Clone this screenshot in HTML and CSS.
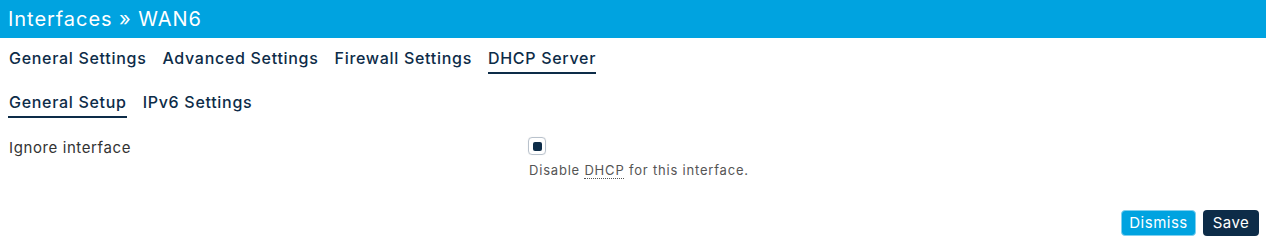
FILE: index.html
```html
<!DOCTYPE html>
<html>
<head>
<meta charset="utf-8">
<link rel="stylesheet" href="styles.css">
</head>
<body>
<div class="page">
  <header class="title-bar"><h2>Interfaces » WAN6</h2></header>
  <nav class="tabs">
    <span class="tab">General Settings</span>
    <span class="tab">Advanced Settings</span>
    <span class="tab">Firewall Settings</span>
    <span class="tab active">DHCP Server</span>
  </nav>
  <nav class="tabs sub">
    <span class="tab active">General Setup</span>
    <span class="tab">IPv6 Settings</span>
  </nav>
  <div class="row">
    <label class="row-label">Ignore interface</label>
    <div class="row-field">
      <span class="checkbox"><span class="check-mark"></span></span>
      <div class="desc">Disable <abbr>DHCP</abbr> for this interface.</div>
    </div>
  </div>
  <footer class="actions">
    <button class="btn dismiss">Dismiss</button>
    <button class="btn save">Save</button>
  </footer>
</div>
</body>
</html>
```
FILE: styles.css
```css
html, body {
  margin: 0;
  padding: 0;
  background: #fff;
}
body {
  font-family: "Inter", "Open Sans", sans-serif;
  color: #0d2c48;
  width: 1266px;
  height: 243px;
  overflow: hidden;
}
.page {
  display: flex;
  flex-direction: column;
}
.title-bar {
  background: #00a3e0;
  height: 38px;
  display: flex;
  align-items: center;
  padding: 0 8px;
}
.title-bar h2 {
  margin: 0;
  font-size: 20px;
  font-weight: 400;
  color: #fff;
  letter-spacing: 0.95px;
}
.tabs {
  display: flex;
  gap: 16px;
  padding: 0 9px;
  margin-top: 10px;
}
.tab {
  font-size: 16px;
  font-weight: 500;
  color: #0d2c48;
  padding-bottom: 4px;
  border-bottom: 2px solid transparent;
  line-height: 20px;
  letter-spacing: 0.7px;
}
.tab.active {
  border-bottom-color: #0d2c48;
}
.tabs.sub {
  margin-top: 18px;
}
.tabs.sub .tab:first-child {
  margin-left: -1px;
  padding-left: 1px;
}
.row {
  display: flex;
  margin-top: 18px;
}
.row-label {
  width: 528px;
  padding-left: 9px;
  box-sizing: border-box;
  font-size: 15px;
  color: #333;
  line-height: 20px;
  padding-top: 2px;
  letter-spacing: 0.6px;
}
.row-field {
  display: flex;
  flex-direction: column;
  align-items: flex-start;
  padding-top: 1px;
}
.checkbox {
  width: 16px;
  height: 16px;
  border: 1px solid #b9c2cc;
  border-radius: 4px;
  display: flex;
  align-items: center;
  justify-content: center;
  box-shadow: 0 0 1px rgba(0,0,0,0.15);
}
.check-mark {
  width: 9px;
  height: 9px;
  background: #0d2c48;
  border-radius: 2px;
}
.desc {
  margin-top: 6px;
  margin-left: 1px;
  font-size: 13px;
  color: #555;
  line-height: 18px;
  letter-spacing: 0.8px;
}
.desc abbr {
  text-decoration: none;
  border-bottom: 1px dotted #555;
}
.actions {
  display: flex;
  justify-content: flex-end;
  gap: 7px;
  padding-right: 7px;
  margin-top: 31px;
}
.btn {
  font-family: "Inter", "Open Sans", sans-serif;
  font-size: 15px;
  height: 26px;
  border-radius: 4px;
  border: 1px solid transparent;
  color: #fff;
  padding: 0 4px;
  line-height: 24px;
  letter-spacing: 0.5px;
}
.btn.dismiss {
  background: #00a3e0;
  border-color: #7fd0ef;
  width: 75px;
}
.btn.save {
  background: #0d2c48;
  width: 56px;
}
```
